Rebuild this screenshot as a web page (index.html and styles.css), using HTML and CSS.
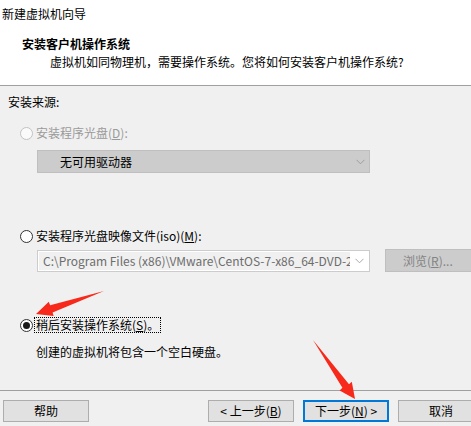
FILE: index.html
```html
<!DOCTYPE html>
<html lang="zh-CN">
<head>
<meta charset="utf-8">
<title>新建虚拟机向导</title>
<link rel="stylesheet" href="styles.css">
</head>
<body>
<div class="window">
  <header class="header">
    <div class="wtitle">新建虚拟机向导</div>
    <div class="heading">安装客户机操作系统</div>
    <div class="sub">虚拟机如同物理机，需要操作系统。您将如何安装客户机操作系统?</div>
  </header>
  <main class="content">
    <div class="label">安装来源:</div>
    <div class="radio-row row-disc is-disabled"><span class="radio"></span><span class="rtext">安装程序光盘(<u>D</u>):</span></div>
    <div class="select">
      <span class="select-text">无可用驱动器</span>
      <svg class="chev" width="9" height="6" viewBox="0 0 9 6"><path d="M0.5 0.8 L4.5 4.8 L8.5 0.8" fill="none" stroke="#9d9d9d" stroke-width="1"/></svg>
    </div>
    <div class="radio-row row-iso"><span class="radio"></span><span class="rtext">安装程序光盘映像文件(iso)(<u>M</u>):</span></div>
    <div class="iso-row">
      <div class="combo">
        <span class="combo-edit">C:\Program Files (x86)\VMware\CentOS-7-x86_64-DVD-2009.iso</span>
        <span class="combo-btn"><svg class="chev" width="9" height="6" viewBox="0 0 9 6"><path d="M0.5 0.8 L4.5 4.8 L8.5 0.8" fill="none" stroke="#a8a8a8" stroke-width="1"/></svg></span>
      </div>
      <div class="browse">浏览(<u>R</u>)...</div>
    </div>
    <div class="radio-row row-later"><span class="radio checked"></span><span class="rtext focus">稍后安装操作系统(<u>S</u>)。</span></div>
    <div class="desc">创建的虚拟机将包含一个空白硬盘。</div>
  </main>
  <footer class="footer">
    <button class="btn">帮助</button>
    <button class="btn btn-back">&lt; 上一步(<u>B</u>)</button>
    <button class="btn btn-default">下一步(<u>N</u>) &gt;</button>
    <button class="btn">取消</button>
  </footer>
  <svg class="arrows" width="471" height="426" viewBox="0 0 471 426">
    <polygon fill="#f7291b" points="104,291 50.1,305.2 48.8,301.8 36,314 53.6,316 52.6,312.6"/>
    <polygon fill="#f7291b" points="313,340 349,384.3 351.8,381.7 355,399 339.6,390.4 342.4,387.7"/>
  </svg>
</div>
</body>
</html>
```

FILE: styles.css
```css
* { box-sizing: border-box; margin: 0; padding: 0; }
html, body { width: 471px; height: 426px; overflow: hidden; }
body {
  font-family: "Noto Sans CJK SC", "Noto Sans", sans-serif;
  font-size: 12px;
  line-height: 16px;
  color: #000;
  background: #f0f0f0;
}
u { text-decoration: underline; text-underline-offset: 1px; }
.window { position: relative; width: 471px; height: 426px; overflow: hidden; }

.header {
  height: 86px;
  background: #fff;
  border-bottom: 1px solid #a0a0a0;
  padding-top: 6px;
}
.wtitle { padding-left: 2px; }
.heading { margin-top: 14px; padding-left: 22px; font-weight: bold; }
.sub { margin-top: 2px; padding-left: 50px; }

.content {
  height: 305px;
  border-bottom: 1px solid #a0a0a0;
  padding: 8px 0 0 8px;
}
.label { height: 16px; }

.radio-row { display: flex; align-items: center; height: 16px; padding-left: 12px; }
.radio {
  flex: none;
  width: 13px; height: 13px;
  border: 1px solid #333;
  border-radius: 50%;
  background: #fff;
  margin-right: 3px;
  display: flex; align-items: center; justify-content: center;
}
.radio.checked::after {
  content: "";
  width: 7px; height: 7px;
  border-radius: 50%;
  background: #1a1a1a;
}
.is-disabled .radio { border-color: #c2c2c2; background: #fafafa; }
.is-disabled .rtext { color: #9a9a9a; }

.row-disc { margin-top: 15px; }
.select {
  margin: 9px 0 0 29px;
  width: 333px; height: 23px;
  background: #cccccc;
  border: 1px solid #bfbfbf;
  display: flex; align-items: center;
  padding: 0 4px 0 22px;
}
.select-text { flex: 1; }

.row-iso { margin-top: 55px; }
.iso-row { display: flex; margin: 6px 0 0 29px; gap: 15px; }
.combo {
  flex: none;
  width: 333px; height: 22px;
  border: 1px solid #cccccc;
  background: #fff;
  padding: 1px;
  display: flex;
}
.combo-edit {
  width: 311px;
  background: #f0f0f0;
  color: #6d6d6d;
  white-space: nowrap;
  overflow: hidden;
  padding: 1px 0 0 4px;
}
.combo-btn { flex: 1; display: flex; align-items: center; justify-content: center; }
.browse {
  flex: none;
  width: 90px; height: 23px;
  margin-top: -1px;
  background: #cccccc;
  border: 1px solid #bfbfbf;
  color: #838383;
  padding: 3px 0 0 17px;
}

.row-later { margin-top: 45px; }
.focus { outline: 1px dotted #000; outline-offset: 0; padding: 0 1px; line-height: 14px; margin-left: -1px; }
.desc { margin: 11px 0 0 28px; }

.footer { display: flex; padding: 9px 0 0 3px; }
.btn {
  flex: none;
  width: 86px; height: 22px;
  margin-right: 9px;
  font: inherit;
  line-height: 16px;
  color: #000;
  background: #e1e1e1;
  border: 1px solid #adadad;
  text-align: center;
}
.btn-back { margin-left: 110px; }
.btn-default { border: 2px solid #0078d7; }

.arrows { position: absolute; left: 0; top: 0; pointer-events: none; }
```
